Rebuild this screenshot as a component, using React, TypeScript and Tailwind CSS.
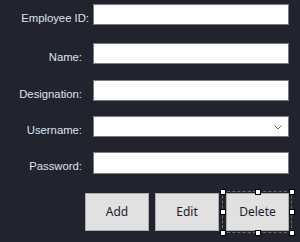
import React from "react";

const labelFont = { fontFamily: '"Liberation Sans", Arial, sans-serif' };

function Row({ label, mt, pr, h = "h-[21px]", combo = false }: { label: string; mt: string; pr: string; h?: string; combo?: boolean }) {
  return (
    <div className={`flex items-start ${h} ${mt}`}>
      <div className={`w-[93px] h-full shrink-0 text-right ${pr} pt-[8px] text-[11.3px] leading-[13px] text-[#dfe4ef] whitespace-nowrap`} style={labelFont}>
        {label}
      </div>
      <div className={`relative w-[196px] h-full bg-white border border-[#7a7a7a]`}>
        {combo && (
          <svg className="absolute right-[6px] top-[8px]" width="8" height="5" viewBox="0 0 8 5">
            <path d="M0.5 0.5 L4 4 L7.5 0.5" fill="none" stroke="#6e6e6e" strokeWidth="1" />
          </svg>
        )}
      </div>
    </div>
  );
}

function Btn({ children }: { children: React.ReactNode }) {
  return (
    <div
      className="w-full h-full bg-[#e1e1e1] border border-[#adadad] flex items-center justify-center text-[12px] text-[#1b1b2a]"
      style={{ fontFamily: '"Noto Sans", "Open Sans", sans-serif' }}
    >
      {children}
    </div>
  );
}

function Handle({ cls }: { cls: string }) {
  return <div className={`absolute w-[6px] h-[6px] bg-white border border-black ${cls}`} />;
}

export default function App() {
  return (
    <div className="w-[300px] h-[242px] bg-[#21232f] overflow-hidden flex flex-col pt-[4px]">
      <Row label="Employee ID:" mt="mt-0" pr="pr-[4px]" />
      <Row label="Name:" mt="mt-[18px]" pr="pr-[11px]" />
      <Row label="Designation:" mt="mt-[16px]" pr="pr-[11px]" />
      <Row label="Username:" mt="mt-[15px]" pr="pr-[11px]" combo />
      <Row label="Password:" mt="mt-[15px]" pr="pr-[11px]" h="h-[22px]" />
      <div className="flex mt-[19px] pl-[85px] h-[38px] shrink-0">
        <div className="w-[64px] h-full">
          <Btn>Add</Btn>
        </div>
        <div className="w-[64px] h-full ml-[6px]">
          <Btn>Edit</Btn>
        </div>
        <div className="relative w-[63px] h-full ml-[7px]">
          <Btn>Delete</Btn>
          <div className="absolute left-[-4px] top-[-2px] w-[70px] h-[42px] border border-dashed border-[#6a6a6a] pointer-events-none" />
          <Handle cls="left-[-6px] top-[-4px]" />
          <Handle cls="left-[29px] top-[-4px]" />
          <Handle cls="left-[63px] top-[-4px]" />
          <Handle cls="left-[-6px] top-[16px]" />
          <Handle cls="left-[63px] top-[16px]" />
          <Handle cls="left-[-6px] top-[37px]" />
          <Handle cls="left-[29px] top-[37px]" />
          <Handle cls="left-[63px] top-[37px]" />
        </div>
      </div>
    </div>
  );
}
